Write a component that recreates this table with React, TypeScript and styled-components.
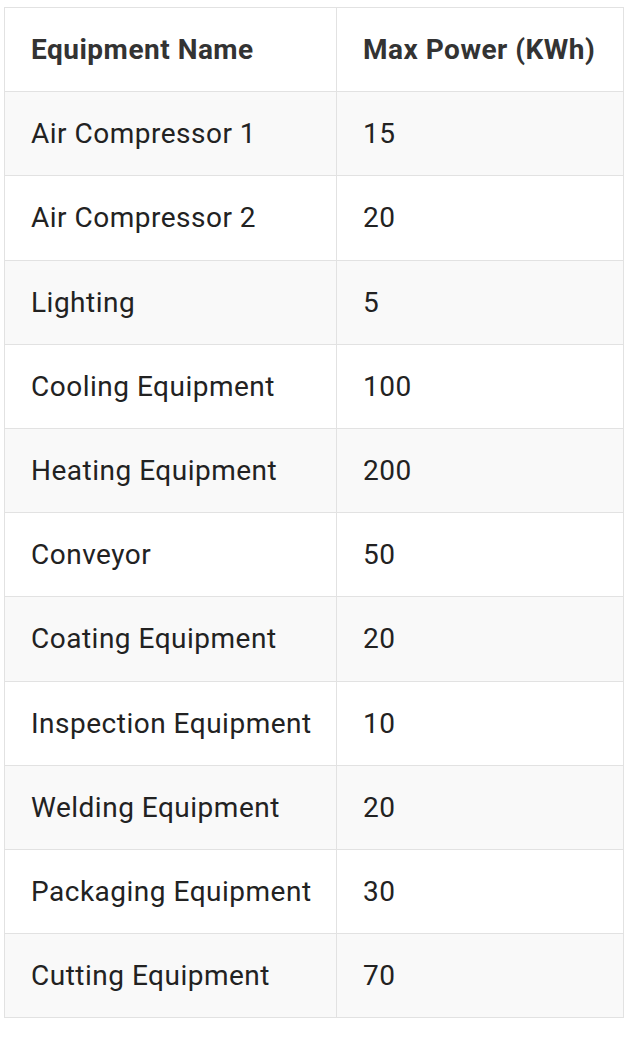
import styled, { createGlobalStyle } from "styled-components"

const GlobalStyle = createGlobalStyle`
  html, body {
    margin: 0;
    padding: 0;
    background: #ffffff;
  }
  body {
    font-family: Roboto, "Liberation Sans", Arial, sans-serif;
  }
`

const Page = styled.div`
  padding: 7px 6px 0 4px;
`

const Table = styled.table`
  width: 620px;
  table-layout: fixed;
  border-collapse: collapse;
  border: 1px solid #e2e2e2;
  font-size: 28px;
  line-height: 29.2px;
  letter-spacing: 0.5px;
`

const HeadCell = styled.th<{ $width?: number }>`
  text-align: left;
  font-weight: 700;
  color: #333333;
  padding: 27px 26px;
  border: 1px solid #e2e2e2;
  white-space: nowrap;
  width: ${(p) => (p.$width ? `${p.$width}px` : "auto")};
`

const Row = styled.tr<{ $striped: boolean }>`
  background: ${(p) => (p.$striped ? "#f9f9f9" : "#ffffff")};
`

const Cell = styled.td`
  color: #222222;
  padding: 27px 26px;
  border: 1px solid #e2e2e2;
  white-space: nowrap;
`

const equipment: [string, number][] = [
  ["Air Compressor 1", 15],
  ["Air Compressor 2", 20],
  ["Lighting", 5],
  ["Cooling Equipment", 100],
  ["Heating Equipment", 200],
  ["Conveyor", 50],
  ["Coating Equipment", 20],
  ["Inspection Equipment", 10],
  ["Welding Equipment", 20],
  ["Packaging Equipment", 30],
  ["Cutting Equipment", 70],
]

function App() {
  return (
    <Page>
      <GlobalStyle />
      <Table>
        <thead>
          <tr>
            <HeadCell $width={279}>Equipment Name</HeadCell>
            <HeadCell>Max Power (KWh)</HeadCell>
          </tr>
        </thead>
        <tbody>
          {equipment.map(([name, power], i) => (
            <Row key={name} $striped={i % 2 === 0}>
              <Cell>{name}</Cell>
              <Cell>{power}</Cell>
            </Row>
          ))}
        </tbody>
      </Table>
    </Page>
  )
}

export default App
